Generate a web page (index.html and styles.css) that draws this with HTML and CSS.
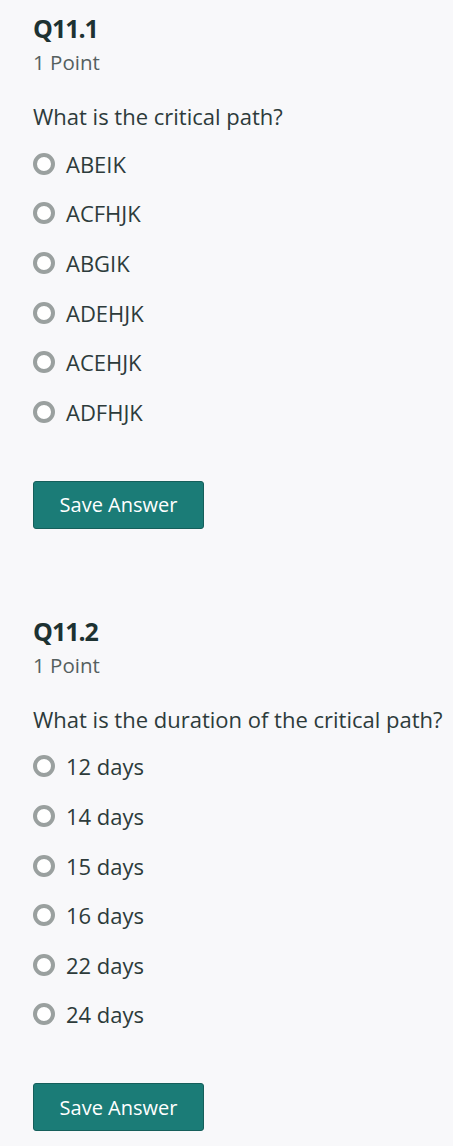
FILE: index.html
```html
<!DOCTYPE html>
<html>
<head>
<meta charset="utf-8">
<link rel="stylesheet" href="styles.css">
</head>
<body>
<main class="page">
  <section class="question">
    <h2 class="q-title">Q11.1</h2>
    <div class="q-points">1 Point</div>
    <p class="q-prompt">What is the critical path?</p>
    <ul class="options">
      <li class="option"><span class="radio"></span><span class="label">ABEIK</span></li>
      <li class="option"><span class="radio"></span><span class="label">ACFHJK</span></li>
      <li class="option"><span class="radio"></span><span class="label">ABGIK</span></li>
      <li class="option"><span class="radio"></span><span class="label">ADEHJK</span></li>
      <li class="option"><span class="radio"></span><span class="label">ACEHJK</span></li>
      <li class="option"><span class="radio"></span><span class="label">ADFHJK</span></li>
    </ul>
    <button class="save">Save Answer</button>
  </section>
  <section class="question">
    <h2 class="q-title">Q11.2</h2>
    <div class="q-points">1 Point</div>
    <p class="q-prompt">What is the duration of the critical path?</p>
    <ul class="options">
      <li class="option"><span class="radio"></span><span class="label">12 days</span></li>
      <li class="option"><span class="radio"></span><span class="label">14 days</span></li>
      <li class="option"><span class="radio"></span><span class="label">15 days</span></li>
      <li class="option"><span class="radio"></span><span class="label">16 days</span></li>
      <li class="option"><span class="radio"></span><span class="label">22 days</span></li>
      <li class="option"><span class="radio"></span><span class="label">24 days</span></li>
    </ul>
    <button class="save">Save Answer</button>
  </section>
</main>
</body>
</html>
```
FILE: styles.css
```css
html, body {
  margin: 0;
  padding: 0;
  background: #f8f8fa;
}
body {
  font-family: "Open Sans", "Noto Sans", sans-serif;
  color: #2d3b3b;
}
.page {
  padding: 12px 0 0 33px;
}
.question {
  margin-bottom: 86px;
}
.question:last-child {
  margin-bottom: 0;
}
.q-title {
  margin: 0;
  font-size: 25px;
  font-weight: 700;
  color: #1d3232;
  line-height: 32px;
  letter-spacing: -1px;
}
.q-points {
  margin-top: 4px;
  font-size: 20.5px;
  line-height: 28px;
  color: #55605f;
}
.q-prompt {
  margin: 26px 0 9px;
  font-size: 22px;
  line-height: 28px;
  white-space: nowrap;
}
.options {
  list-style: none;
  margin: 0;
  padding: 0;
}
.option {
  display: flex;
  align-items: center;
  height: 49.6px;
  font-size: 22px;
}
.radio {
  width: 14px;
  height: 14px;
  border: 4px solid #9aa09f;
  border-radius: 50%;
  margin-right: 11px;
  background: #fff;
  flex: none;
}
.save {
  margin-top: 44px;
  width: 171px;
  height: 48px;
  background: #1b7c77;
  border: 1px solid #155f5b;
  border-radius: 3px;
  color: #fff;
  font-family: inherit;
  font-size: 20px;
  padding: 0;
}
```
